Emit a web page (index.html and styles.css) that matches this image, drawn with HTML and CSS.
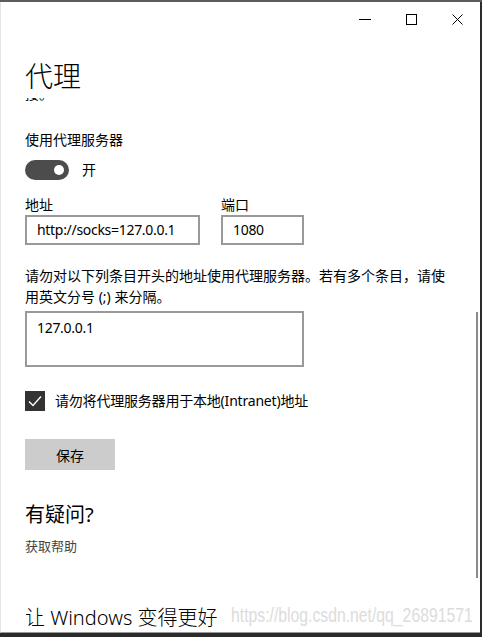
FILE: index.html
```html
<!DOCTYPE html>
<html lang="zh-CN">
<head>
  <meta charset="UTF-8" />
  <meta name="viewport" content="width=device-width, initial-scale=1.0" />
  <title>代理</title>
  <link rel="stylesheet" href="styles.css">
</head>
<body>
  <div class="top-strip"></div>
  <div class="window">
    <div class="title-bar">
      <div class="caption-btn">
        <svg width="12" height="12" viewBox="0 0 12 12"><line x1="0" y1="6.5" x2="12" y2="6.5" stroke="#000" stroke-width="1"/></svg>
      </div>
      <div class="caption-btn">
        <svg width="11" height="11" viewBox="0 0 11 11"><rect x="0.5" y="0.5" width="10" height="10" fill="none" stroke="#000" stroke-width="1"/></svg>
      </div>
      <div class="caption-btn">
        <svg width="11" height="11" viewBox="0 0 11 11"><path d="M0.5 0.5 L10.5 10.5 M10.5 0.5 L0.5 10.5" stroke="#000" stroke-width="1"/></svg>
      </div>
    </div>

    <div class="content">
      <h1 class="page-title">代理</h1>
      <div class="clipped-line"><span>接。</span></div>

      <div class="setting-label">使用代理服务器</div>
      <div class="toggle-row">
        <div class="toggle"><div class="toggle-knob"></div></div>
        <span>开</span>
      </div>

      <div class="field-row">
        <div class="field">
          <div class="field-label">地址</div>
          <div class="text-box address-box">http://socks=127.0.0.1</div>
        </div>
        <div class="field">
          <div class="field-label">端口</div>
          <div class="text-box port-box">1080</div>
        </div>
      </div>

      <p class="description">请勿对以下列条目开头的地址使用代理服务器。若有多个条目，请使<br>用英文分号 (;) 来分隔。</p>
      <div class="text-box exceptions-box">127.0.0.1</div>

      <div class="check-row">
        <div class="checkbox">
          <svg width="20" height="20" viewBox="0 0 20 20"><polyline points="4,10.5 8,14.5 16,5.5" fill="none" stroke="#fff" stroke-width="1.4"/></svg>
        </div>
        <span>请勿将代理服务器用于本地(Intranet)地址</span>
      </div>

      <button class="save-btn">保存</button>

      <h2 class="section-title">有疑问?</h2>
      <div class="help-link">获取帮助</div>

      <h2 class="section-title bottom-title">让 Windows 变得更好</h2>
    </div>

    <div class="scroll-thumb"></div>
    <div class="watermark">https://blog.csdn.net/qq_26891571</div>
  </div>
</body>
</html>
```

FILE: styles.css
```css
/* Page frame */
body {
  margin: 0;
  height: 637px;
  overflow: hidden;
  background: #2b2b2b;
  font-family: "Noto Sans", "Noto Sans CJK SC", sans-serif;
  color: #000;
}

.top-strip {
  height: 2px;
  background: #5c5c5c;
}

.window {
  position: relative;
  width: 479px;
  height: 630px;
  background: #fff;
  border-left: 1px solid #e4e4e4;
  border-bottom: 1px solid #9a9a9a;
  overflow: hidden;
}

/* Caption buttons */
.title-bar {
  display: flex;
  justify-content: flex-end;
  height: 34px;
}

.caption-btn {
  width: 46px;
  display: flex;
  align-items: center;
  justify-content: center;
}

/* Settings content */
.content {
  padding-left: 24px;
}

.page-title {
  margin: 24px 0 0;
  font-size: 28px;
  font-weight: 300;
  line-height: 32px;
}

.clipped-line {
  height: 4px;
  margin-top: 6px;
  overflow: hidden;
  display: flex;
  align-items: flex-end;
  font-size: 14px;
  line-height: 16px;
}

.setting-label {
  margin-top: 28px;
  font-size: 14px;
  line-height: 20px;
}

.toggle-row {
  display: flex;
  align-items: center;
  gap: 13px;
  margin-top: 10px;
  font-size: 14px;
  line-height: 20px;
}

.toggle {
  width: 44px;
  height: 20px;
  border-radius: 10px;
  background: #4c4c4c;
  display: flex;
  align-items: center;
  justify-content: flex-end;
  padding-right: 5px;
  box-sizing: border-box;
}

.toggle-knob {
  width: 10px;
  height: 10px;
  border-radius: 50%;
  background: #fff;
}

.field-row {
  display: flex;
  gap: 21px;
  margin-top: 15px;
}

.field-label {
  font-size: 14px;
  line-height: 20px;
}

.text-box {
  box-sizing: border-box;
  height: 30px;
  border: 2px solid #999;
  padding: 0 10px;
  font-size: 14px;
  line-height: 26px;
  letter-spacing: -0.3px;
  white-space: nowrap;
}

.address-box {
  width: 175px;
}

.port-box {
  width: 83px;
}

.description {
  margin: 20px 0 0;
  font-size: 14px;
  line-height: 21px;
}

.exceptions-box {
  width: 279px;
  height: 56px;
  margin-top: 4px;
  padding-top: 2px;
}

.check-row {
  display: flex;
  align-items: center;
  gap: 10px;
  margin-top: 24px;
  font-size: 14px;
  line-height: 20px;
  letter-spacing: -0.2px;
}

.checkbox {
  width: 20px;
  height: 20px;
  background: #333;
}

.checkbox svg {
  display: block;
}

.save-btn {
  display: block;
  width: 90px;
  height: 31px;
  margin-top: 28px;
  border: none;
  background: #ccc;
  font-family: inherit;
  font-size: 14px;
  color: #000;
  padding: 0;
}

.section-title {
  margin: 32px 0 0;
  font-size: 20px;
  font-weight: 400;
  line-height: 26px;
}

.help-link {
  margin-top: 9px;
  font-size: 13px;
  line-height: 18px;
  color: #444;
}

.bottom-title {
  margin-top: 51px;
  line-height: 24px;
  font-weight: 300;
}

/* Overlays */
.scroll-thumb {
  position: absolute;
  left: 475px;
  top: 310px;
  width: 2px;
  height: 266px;
  background: #8a8a8a;
}

.watermark {
  position: absolute;
  left: 230px;
  top: 601px;
  font-family: "Liberation Sans", Arial, sans-serif;
  font-size: 21px;
  color: #dcdcdc;
  white-space: nowrap;
  transform: scaleX(0.75);
  transform-origin: left center;
}
```
